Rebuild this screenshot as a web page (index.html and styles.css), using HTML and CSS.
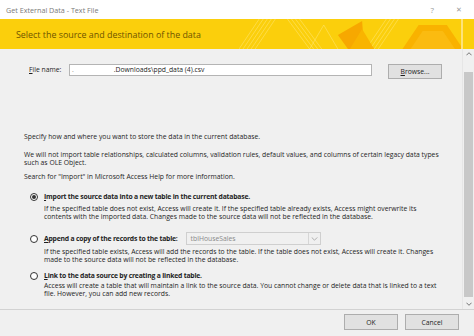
FILE: index.html
```html
<!DOCTYPE html>
<html lang="en">
<head>
  <meta charset="UTF-8" />
  <title>Get External Data - Text File</title>
  <link rel="stylesheet" href="styles.css">
</head>
<body>
  <div class="dialog">
    <div class="titlebar">
      <span class="title">Get External Data - Text File</span>
      <span class="tb-btn help">?</span>
      <span class="tb-btn close">✕</span>
    </div>

    <div class="banner">
      <span class="banner-text">Select the source and destination of the data</span>
      <svg class="banner-art" viewBox="0 0 220 30" preserveAspectRatio="none">
        <g stroke="#ffe46a" stroke-width="0.6" fill="none">
          <path d="M0 30 L20 0 M4 30 L24 0 M8 30 L28 0 M12 30 L32 0 M16 30 L36 0"/>
          <path d="M48 0 L70 30 M52 0 L74 30 M56 0 L78 30 M60 0 L82 30"/>
          <path d="M70 30 L84 6 L98 30"/>
          <path d="M126 30 L146 0 M130 30 L150 0 M134 30 L154 0 M138 30 L158 0"/>
        </g>
        <polygon points="98,16 122,2 124,30 108,30" fill="#f7a800"/>
        <polygon points="110,30 122,10 134,30" fill="#f9b400"/>
        <polygon points="162,30 178,6 206,6 222,30" fill="#f9b200"/>
        <polygon points="170,30 182,12 202,12 214,30" fill="#fbbb10"/>
      </svg>
      <span class="banner-edge"></span>
    </div>

    <div class="body">
      <div class="content">
        <div class="file-row">
          <label class="file-label"><u>F</u>ile name:</label>
          <div class="file-input"><span class="dot">.</span><span class="path">.Downloads\ppd_data (4).csv</span></div>
          <button class="btn browse"><u>B</u>rowse...</button>
        </div>

        <p class="intro">Specify how and where you want to store the data in the current database.</p>
        <p class="note">We will not import table relationships, calculated columns, validation rules, default values, and columns of certain legacy data types such as OLE Object.</p>
        <p class="note search">Search for "Import" in Microsoft Access Help for more information.</p>

        <div class="option">
          <div class="option-head">
            <span class="radio checked"></span>
            <span class="option-label"><u>I</u>mport the source data into a new table in the current database.</span>
          </div>
          <p class="option-desc">If the specified table does not exist, Access will create it. If the specified table already exists, Access might overwrite its contents with the imported data. Changes made to the source data will not be reflected in the database.</p>
        </div>

        <div class="option append">
          <div class="option-head">
            <span class="radio"></span>
            <span class="option-label"><u>A</u>ppend a copy of the records to the table:</span>
            <div class="combo">
              <span class="combo-text">tblHouseSales</span>
              <span class="combo-arrow">
                <svg viewBox="0 0 8 5" width="7" height="4"><path d="M0.5 0.5 L4 4 L7.5 0.5" fill="none" stroke="#a0a0a0" stroke-width="1"/></svg>
              </span>
            </div>
          </div>
          <p class="option-desc">If the specified table exists, Access will add the records to the table. If the table does not exist, Access will create it. Changes made to the source data will not be reflected in the database.</p>
        </div>

        <div class="option link">
          <div class="option-head">
            <span class="radio"></span>
            <span class="option-label"><u>L</u>ink to the data source by creating a linked table.</span>
          </div>
          <p class="option-desc">Access will create a table that will maintain a link to the source data. You cannot change or delete data that is linked to a text<br>file. However, you can add new records.</p>
        </div>
      </div>

      <div class="scrollbar">
        <span class="sb-arrow">
          <svg viewBox="0 0 7 4" width="6" height="4"><path d="M0.5 3.5 L3.5 0.5 L6.5 3.5" fill="none" stroke="#606060" stroke-width="1"/></svg>
        </span>
        <div class="sb-track"><div class="sb-thumb"></div></div>
        <span class="sb-arrow">
          <svg viewBox="0 0 7 4" width="6" height="4"><path d="M0.5 0.5 L3.5 3.5 L6.5 0.5" fill="none" stroke="#606060" stroke-width="1"/></svg>
        </span>
      </div>
    </div>

    <div class="footer">
      <button class="btn">OK</button>
      <button class="btn">Cancel</button>
    </div>
  </div>
</body>
</html>
```

FILE: styles.css
```css
html, body {
  margin: 0;
  padding: 0;
}

body {
  font-family: "Open Sans", "Noto Sans", sans-serif;
  font-size: 6.8px;
  color: #1e1e1e;
  background: #f0f0f0;
}

.dialog {
  width: 474px;
  height: 336px;
  display: flex;
  flex-direction: column;
  overflow: hidden;
}

.titlebar {
  flex: 0 0 19px;
  background: #fff;
  display: flex;
  align-items: center;
  padding-left: 6px;
  color: #7a7a7a;
  font-size: 7.2px;
}

.title {
  flex: 1;
}

.tb-btn {
  color: #999;
  font-size: 8px;
}

.help {
  margin-right: 22px;
}

.close {
  margin-right: 12px;
  font-size: 7px;
}

.banner {
  flex: 0 0 30px;
  background: #fbcf0c;
  display: flex;
  align-items: center;
  position: relative;
  overflow: hidden;
}

.banner-text {
  padding-left: 16px;
  font-size: 8.9px;
  color: #6e5400;
  position: relative;
  z-index: 1;
}

.banner-art {
  position: absolute;
  left: 239px;
  top: 0;
  width: 222px;
  height: 30px;
}

.banner-edge {
  position: absolute;
  left: 461px;
  top: 0;
  width: 2px;
  height: 30px;
  background: #fde37a;
}

.body {
  flex: 0 0 260px;
  min-height: 0;
  overflow: hidden;
  display: flex;
  border-bottom: 1px solid #d2d2d2;
}

.content {
  flex: 1;
  padding: 15px 0 0 24px;
  line-height: 8px;
}

.file-row {
  display: flex;
  align-items: flex-start;
  height: 15px;
}

.file-label {
  width: 45px;
  padding-left: 5px;
  line-height: 12px;
  box-sizing: border-box;
}

.file-input {
  width: 303px;
  height: 12px;
  box-sizing: border-box;
  background: #fff;
  border: 1px solid #b4b4b4;
  display: flex;
  align-items: center;
}

.dot {
  padding-left: 2px;
  color: #888;
}

.path {
  padding-left: 40px;
}

.btn {
  font-family: inherit;
  font-size: 6.8px;
  color: #1e1e1e;
  background: #e1e1e1;
  border: 1px solid #adadad;
  padding: 0;
  height: 15px;
}

.browse {
  width: 54px;
  margin-left: 16px;
}

p {
  margin: 0;
}

.intro {
  margin-top: 54px;
}

.note {
  margin-top: 10px;
  padding-right: 12px;
}

.note.search {
  margin-top: 6px;
}

.option {
  margin-top: 10px;
  padding-left: 6px;
}

.option.link {
  margin-top: 6px;
}

.option-head {
  display: flex;
  align-items: center;
  height: 11px;
}

.append .option-head {
  height: 15px;
}

.option-desc {
  padding-left: 14px;
  padding-right: 20px;
  margin-top: 3px;
}

.append .option-desc {
  margin-top: 2px;
}

.link .option-desc {
  margin-top: 1px;
}

.radio {
  width: 8px;
  height: 8px;
  box-sizing: border-box;
  border: 1px solid #333;
  border-radius: 50%;
  margin-right: 6px;
  display: flex;
  align-items: center;
  justify-content: center;
  background: #fff;
}

.radio.checked::after {
  content: "";
  width: 4px;
  height: 4px;
  border-radius: 50%;
  background: #333;
}

.option-label {
  font-weight: bold;
  letter-spacing: -0.2px;
}

.combo {
  margin-left: 8px;
  width: 135px;
  height: 13px;
  box-sizing: border-box;
  border: 1px solid #cfcfcf;
  background: #f0f0f0;
  display: flex;
  align-items: center;
  color: #8a8a8a;
}

.combo-text {
  flex: 1;
  padding-left: 4px;
}

.combo-arrow {
  width: 11px;
  height: 11px;
  border-left: 1px solid #d6d6d6;
  display: flex;
  align-items: center;
  justify-content: center;
}

.scrollbar {
  flex: 0 0 11px;
  display: flex;
  flex-direction: column;
  align-items: center;
  background: #f0f0f0;
  border-left: 1px solid #e6e6e6;
}

.sb-arrow {
  height: 10px;
  display: flex;
  align-items: center;
  justify-content: center;
}

.sb-track {
  flex: 1;
  width: 100%;
  padding: 13px 1px 2px;
  box-sizing: border-box;
  display: flex;
}

.sb-thumb {
  flex: 1;
  background: #c8c8c8;
}

.footer {
  flex: 1;
  display: flex;
  justify-content: flex-end;
  gap: 7px;
  padding: 4px 15px 0 0;
}

.footer .btn {
  width: 54px;
  height: 16px;
}
```
